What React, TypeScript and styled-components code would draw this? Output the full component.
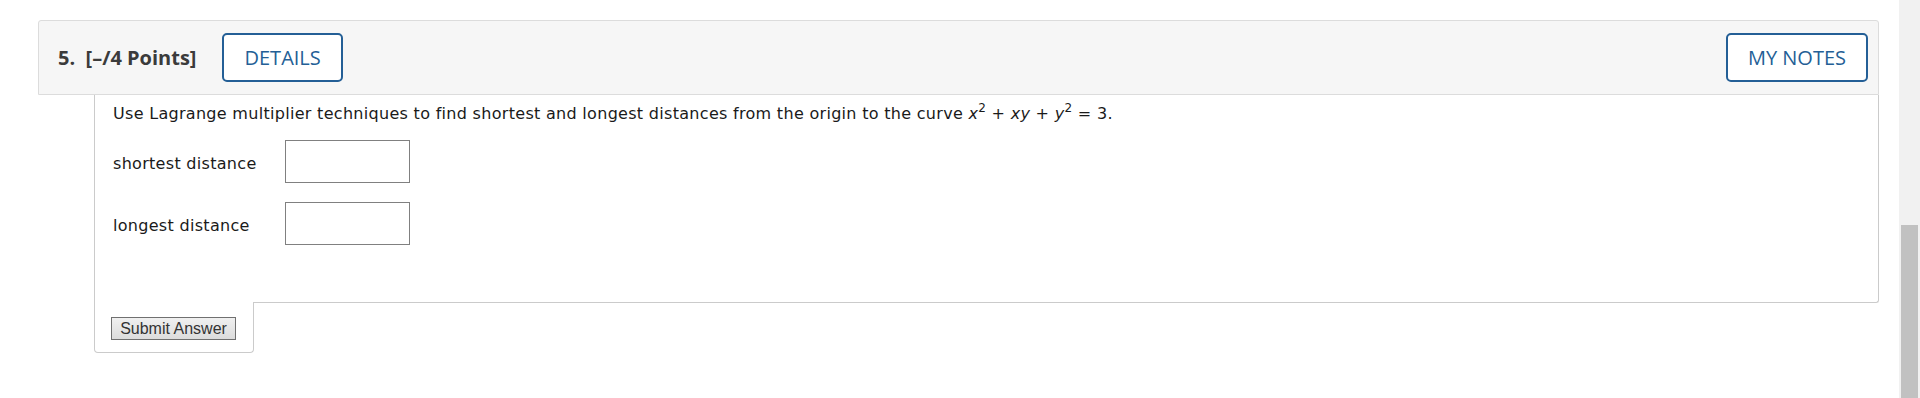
import * as React from 'react'
import styled, { createGlobalStyle } from 'styled-components'

const GlobalStyle = createGlobalStyle`
    html, body {
        margin: 0;
        padding: 0;
        background: #fff;
        overflow: hidden;
    }
`

const Page = styled.div`
    display: flex;
    height: 398px;
`

const Main = styled.main`
    flex: 1;
    padding: 20px 20px 0 38px;
`

const Scrollbar = styled.div`
    width: 21px;
    background: #f1f1f1;
    display: flex;
    justify-content: center;
`

const Thumb = styled.div`
    width: 17px;
    margin-top: 225px;
    background: #c1c1c1;
`

const Header = styled.header`
    display: flex;
    align-items: center;
    height: 73px;
    padding: 0 10px 0 19px;
    background: #f6f6f6;
    border: 1px solid #dcdcdc;
    border-radius: 3px 3px 0 0;
`

const Title = styled.div`
    font-family: 'Open Sans', sans-serif;
    font-weight: 700;
    font-size: 20px;
    color: #3b3b3b;
    white-space: pre;
    margin-right: 26px;
`

const HeaderButton = styled.button<{ $push?: boolean }>`
    height: 49px;
    padding: 0 20px;
    margin-left: ${props => (props.$push ? 'auto' : '0')};
    background: #fff;
    border: 2px solid #245f96;
    border-radius: 5px;
    font-family: 'Open Sans', sans-serif;
    font-size: 20px;
    color: #245f96;
    cursor: pointer;
`

const Panel = styled.section`
    margin-left: 56px;
`

const Body = styled.div`
    height: 208px;
    padding: 10px 0 0 18px;
    box-sizing: border-box;
    border: 1px solid #cbcbcb;
    border-top: none;
    border-radius: 0 0 3px 0;
    font-family: 'DejaVu Sans', Verdana, sans-serif;
    font-size: 16px;
    letter-spacing: 0.3px;
    line-height: 18px;
    color: #1a1a1a;
`

const Question = styled.p`
    margin: 0 0 17px;
`

const Var = styled.i`
    font-style: italic;
`

const Sup = styled.sup`
    font-size: 12px;
    line-height: 0;
    vertical-align: 7px;
`

const Row = styled.div`
    display: flex;
    align-items: flex-start;
    margin-bottom: 19px;
`

const Label = styled.label`
    width: 172px;
    padding-top: 15px;
`

const AnswerBox = styled.input`
    width: 125px;
    height: 43px;
    box-sizing: border-box;
    margin: 0;
    border: 1px solid #808080;
    background: #fff;
`

const Tab = styled.div`
    width: 160px;
    box-sizing: border-box;
    margin-top: -1px;
    padding: 15px 0 12px 16px;
    background: #fff;
    border: 1px solid #cbcbcb;
    border-top: none;
    border-radius: 0 0 4px 4px;
`

const SubmitButton = styled.button`
    width: 125px;
    height: 23px;
    padding: 0;
    border: 1px solid #707070;
    background: linear-gradient(#f0f0f0, #dcdcdc);
    font-family: 'Liberation Sans', Arial, sans-serif;
    font-size: 16px;
    color: #333;
    display: block;
`

export default function App() {
    return (
        <Page>
            <GlobalStyle />
            <Main>
                <Header>
                    <Title>{'5.  [–/4 Points]'}</Title>
                    <HeaderButton>DETAILS</HeaderButton>
                    <HeaderButton $push>MY NOTES</HeaderButton>
                </Header>
                <Panel>
                    <Body>
                        <Question>
                            Use Lagrange multiplier techniques to find shortest and longest distances from the origin to the curve{' '}
                            <Var>x</Var><Sup>2</Sup> + <Var>xy</Var> + <Var>y</Var><Sup>2</Sup> = 3.
                        </Question>
                        <Row>
                            <Label>shortest distance</Label>
                            <AnswerBox type="text" />
                        </Row>
                        <Row>
                            <Label>longest distance</Label>
                            <AnswerBox type="text" />
                        </Row>
                    </Body>
                    <Tab>
                        <SubmitButton>Submit Answer</SubmitButton>
                    </Tab>
                </Panel>
            </Main>
            <Scrollbar>
                <Thumb />
            </Scrollbar>
        </Page>
    )
}
